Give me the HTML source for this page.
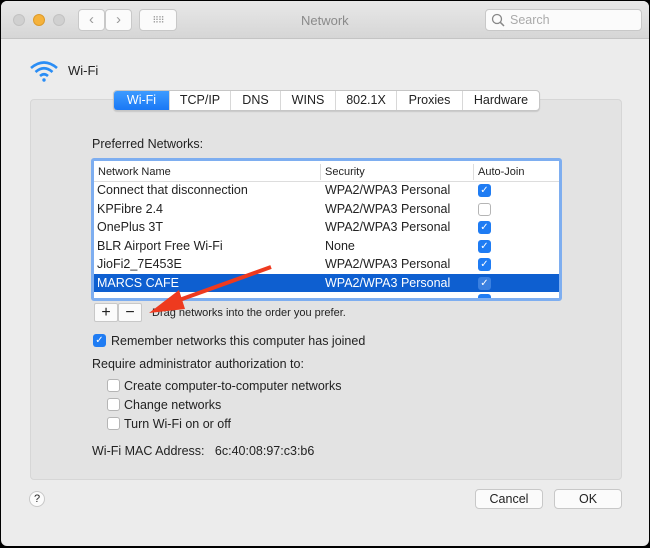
<!DOCTYPE html>
<html><head><style>
*{box-sizing:border-box;margin:0;padding:0}
body{width:650px;height:548px;background:#000;font-family:"Liberation Sans",sans-serif;font-size:12px;color:#222;position:relative;overflow:hidden}
.win{position:absolute;left:1px;top:1px;width:648px;height:545px;background:#ececec;border-radius:6px;overflow:hidden}
.tb{position:absolute;left:0;top:0;width:648px;height:38px;background:linear-gradient(#e8e8e8,#d6d6d6);border-bottom:1px solid #c4c4c4}
.a{position:absolute}
.dot{position:absolute;top:13px;width:12px;height:12px;border-radius:50%;background:#d0d0d0;border:1px solid #c2c2c2}
.btn{position:absolute;background:#fbfbfb;border:1px solid #c8c8c8;border-radius:4px}
.panel{position:absolute;left:29px;top:98px;width:592px;height:381px;background:#e3e3e3;border:1px solid #d6d6d6;border-radius:4px}
.tabs{position:absolute;left:112px;top:89px;height:21px;display:flex;background:#fff;border:1px solid #c6c6c6;border-radius:4px;box-shadow:0 1px 1px rgba(0,0,0,.12);overflow:hidden}
.tabs div{text-align:center;line-height:19px;font-size:12.5px;border-left:1px solid #d8d8d8}
.tabs div:first-child{border:0;background:linear-gradient(#3d9bff,#1a78f5);color:#fff}
.tbl{position:absolute;left:90px;top:157px;width:471px;height:143px;border:3px solid #7eaef0;border-radius:3px;background:#fff;overflow:hidden}
.row{position:absolute;left:0;width:465px;height:18.5px;line-height:18.5px;font-size:12.5px}
.row span{position:absolute}
.cb{position:absolute;width:13px;height:13px;border-radius:3px;background:#1f7cf3;color:#fff;font-size:10px;line-height:13px;text-align:center}
.cb.off{background:#fff;border:1px solid #b5b5b5}
.chk{position:absolute;width:13px;height:13px;border-radius:3px;border:1px solid #b5b5b5;background:#fff}
.t{position:absolute;font-size:12.5px;white-space:nowrap}
</style></head><body>
<div class="win">
<div class="tb">
<div class="dot" style="left:12px"></div>
<div class="dot" style="left:32px;background:#f5b23b;border-color:#dc9a2a"></div>
<div class="dot" style="left:52px"></div>
<div class="btn" style="left:77px;top:8px;width:27px;height:22px;color:#999;text-align:center;line-height:20px;font-size:15px">‹</div>
<div class="btn" style="left:104px;top:8px;width:27px;height:22px;color:#999;text-align:center;line-height:20px;font-size:15px">›</div>
<div class="btn" style="left:138px;top:8px;width:38px;height:22px;color:#999;text-align:center;line-height:20px;font-size:9px;letter-spacing:-1px">⠿⠿</div>
<div class="a" style="left:300px;top:12px;color:#8a8a8a;font-size:13px">Network</div>
<div class="btn" style="left:484px;top:8px;width:157px;height:22px;color:#aaa;font-size:12.5px;line-height:20px;padding-left:24px">Search</div>
<svg class="a" style="left:490px;top:12px" width="14" height="14"><circle cx="6" cy="6" r="4.5" stroke="#888" stroke-width="1.3" fill="none"/><path d="M9.3 9.3L13 13" stroke="#888" stroke-width="1.5"/></svg>
</div>
<svg class="a" style="left:28px;top:58px" width="32" height="24"><path d="M2 9Q15 -2 28 9" stroke="#2a8df5" stroke-width="2.6" fill="none"/><path d="M6.5 13Q15 5.5 23.5 13" stroke="#2a8df5" stroke-width="2.6" fill="none"/><path d="M11 17Q15 13.5 19 17" stroke="#2a8df5" stroke-width="2.6" fill="none"/><circle cx="15" cy="21" r="1.7" fill="#2a8df5"/></svg>
<div class="t" style="left:67px;top:62px;font-size:13px">Wi-Fi</div>
<div class="panel"></div>
<div class="tabs"><div style="width:55px">Wi-Fi</div><div style="width:61px">TCP/IP</div><div style="width:50px">DNS</div><div style="width:55px">WINS</div><div style="width:61px">802.1X</div><div style="width:66px">Proxies</div><div style="width:77px">Hardware</div></div>
<div class="t" style="left:91px;top:136px">Preferred Networks:</div>
<div class="tbl">
<div class="row" style="top:2px;font-size:11px;border-bottom:1px solid #ddd"><span style="left:4px">Network Name</span><span style="left:231px">Security</span><span style="left:384px">Auto-Join</span></div>
<div class="a" style="left:226px;top:3px;width:1px;height:16px;background:#ddd"></div>
<div class="a" style="left:379px;top:3px;width:1px;height:16px;background:#ddd"></div>
<div class="row" style="top:20px"><span style="left:3px">Connect that disconnection</span><span style="left:231px">WPA2/WPA3 Personal</span><div class="cb" style="left:384px;top:3px">✓</div></div>
<div class="row" style="top:38.5px"><span style="left:3px">KPFibre 2.4</span><span style="left:231px">WPA2/WPA3 Personal</span><div class="cb off" style="left:384px;top:3px"></div></div>
<div class="row" style="top:57px"><span style="left:3px">OnePlus 3T</span><span style="left:231px">WPA2/WPA3 Personal</span><div class="cb" style="left:384px;top:3px">✓</div></div>
<div class="row" style="top:75.5px"><span style="left:3px">BLR Airport Free Wi-Fi</span><span style="left:231px">None</span><div class="cb" style="left:384px;top:3px">✓</div></div>
<div class="row" style="top:94px"><span style="left:3px">JioFi2_7E453E</span><span style="left:231px">WPA2/WPA3 Personal</span><div class="cb" style="left:384px;top:3px">✓</div></div>
<div class="row" style="top:112.5px;background:#0e5fd0;color:#fff"><span style="left:3px">MARCS CAFE</span><span style="left:231px">WPA2/WPA3 Personal</span><div class="cb" style="left:384px;top:3px;background:#3a80e0">✓</div></div>
<div class="row" style="top:131px"><div class="cb" style="left:384px;top:2px"></div></div>
</div>
<div class="btn" style="left:93px;top:302px;width:24px;height:19px;border-radius:2px;text-align:center;line-height:17px;font-size:16px">+</div>
<div class="btn" style="left:117px;top:302px;width:24px;height:19px;border-radius:2px;text-align:center;line-height:17px;font-size:16px">−</div>
<div class="t" style="left:151px;top:306px;font-size:11px">Drag networks into the order you prefer.</div>
<svg class="a" style="left:140px;top:262px" width="135" height="55"><path d="M130 4L30 40" stroke="#ee3a1f" stroke-width="4"/><path d="M8 50L38 27L44 46Z" fill="#ee3a1f"/></svg>
<div class="cb" style="left:92px;top:333px">✓</div>
<div class="t" style="left:110px;top:333px">Remember networks this computer has joined</div>
<div class="t" style="left:91px;top:356px">Require administrator authorization to:</div>
<div class="chk" style="left:106px;top:378px"></div><div class="t" style="left:123px;top:378px">Create computer-to-computer networks</div>
<div class="chk" style="left:106px;top:397px"></div><div class="t" style="left:123px;top:397px">Change networks</div>
<div class="chk" style="left:106px;top:416px"></div><div class="t" style="left:123px;top:416px">Turn Wi-Fi on or off</div>
<div class="t" style="left:91px;top:443px">Wi-Fi MAC Address:&nbsp;&nbsp; 6c:40:08:97:c3:b6</div>
<div class="btn" style="left:28px;top:490px;width:16px;height:16px;border-radius:50%;font-size:11px;text-align:center;line-height:14px">?</div>
<div class="btn" style="left:474px;top:488px;width:68px;height:20px;text-align:center;line-height:18px;font-size:12.5px">Cancel</div>
<div class="btn" style="left:553px;top:488px;width:68px;height:20px;text-align:center;line-height:18px;font-size:12.5px">OK</div>
</div>
</body></html>
